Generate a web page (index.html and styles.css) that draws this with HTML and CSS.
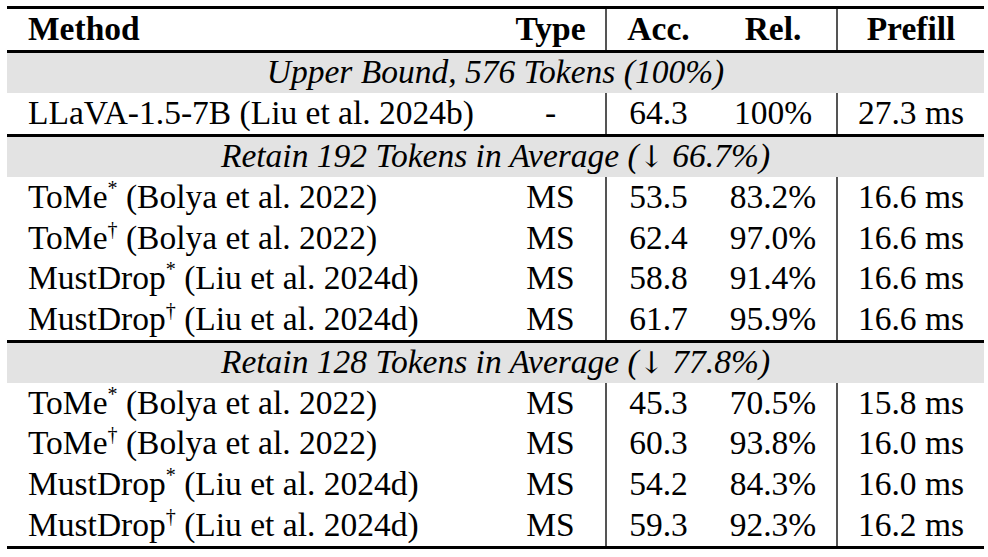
FILE: index.html
```html
<!DOCTYPE html>
<html>
<head>
<meta charset="utf-8">
<link rel="stylesheet" href="styles.css">
</head>
<body>
<table class="results">
  <colgroup>
    <col class="c-method"><col class="c-type"><col class="c-acc"><col class="c-rel"><col class="c-prefill">
  </colgroup>
  <thead>
    <tr class="head">
      <th class="left">Method</th>
      <th>Type</th>
      <th class="sep">Acc.</th>
      <th>Rel.</th>
      <th class="sep">Prefill</th>
    </tr>
  </thead>
  <tbody>
    <tr class="group first"><td colspan="5">Upper Bound, 576 Tokens (100%)</td></tr>
    <tr>
      <td class="left">LLaVA-1.5-7B (Liu et al. 2024b)</td>
      <td>-</td><td class="sep">64.3</td><td>100%</td><td class="sep">27.3 ms</td>
    </tr>
  </tbody>
  <tbody>
    <tr class="group first"><td colspan="5">Retain 192 Tokens in Average (<span class="arrow">↓</span> 66.7%)</td></tr>
    <tr><td class="left">ToMe<sup>*</sup> (Bolya et al. 2022)</td><td>MS</td><td class="sep">53.5</td><td>83.2%</td><td class="sep">16.6 ms</td></tr>
    <tr><td class="left">ToMe<sup>†</sup> (Bolya et al. 2022)</td><td>MS</td><td class="sep">62.4</td><td>97.0%</td><td class="sep">16.6 ms</td></tr>
    <tr><td class="left">MustDrop<sup>*</sup> (Liu et al. 2024d)</td><td>MS</td><td class="sep">58.8</td><td>91.4%</td><td class="sep">16.6 ms</td></tr>
    <tr><td class="left">MustDrop<sup>†</sup> (Liu et al. 2024d)</td><td>MS</td><td class="sep">61.7</td><td>95.9%</td><td class="sep">16.6 ms</td></tr>
  </tbody>
  <tbody>
    <tr class="group first"><td colspan="5">Retain 128 Tokens in Average (<span class="arrow">↓</span> 77.8%)</td></tr>
    <tr><td class="left">ToMe<sup>*</sup> (Bolya et al. 2022)</td><td>MS</td><td class="sep">45.3</td><td>70.5%</td><td class="sep">15.8 ms</td></tr>
    <tr><td class="left">ToMe<sup>†</sup> (Bolya et al. 2022)</td><td>MS</td><td class="sep">60.3</td><td>93.8%</td><td class="sep">16.0 ms</td></tr>
    <tr><td class="left">MustDrop<sup>*</sup> (Liu et al. 2024d)</td><td>MS</td><td class="sep">54.2</td><td>84.3%</td><td class="sep">16.0 ms</td></tr>
    <tr class="last"><td class="left">MustDrop<sup>†</sup> (Liu et al. 2024d)</td><td>MS</td><td class="sep">59.3</td><td>92.3%</td><td class="sep">16.2 ms</td></tr>
  </tbody>
</table>
</body>
</html>
```
FILE: styles.css
```css
html, body {
  margin: 0;
  padding: 0;
  background: #ffffff;
}
body {
  padding: 6px 0 0 7px;
  font-family: "Liberation Serif", "Times New Roman", serif;
  color: #000000;
}
.results {
  width: 977px;
  table-layout: fixed;
  border-collapse: collapse;
  font-family: "Liberation Serif", "Times New Roman", serif;
  font-size: 33.5px;
  line-height: 1;
}
.c-method { width: 489px; }
.c-type { width: 110px; }
.c-acc { width: 104px; }
.c-rel { width: 127px; }
.c-prefill { width: 147px; }

.results th,
.results td {
  height: 38.6px;
  padding: 0 0 2px 0;
  text-align: center;
  vertical-align: middle;
  white-space: nowrap;
}
.results th {
  font-weight: bold;
}
.results .left {
  text-align: left;
  padding-left: 21px;
}
.results .sep {
  border-left: 2px solid #555555;
}
.head th {
  border-top: 3px solid #000000;
  border-bottom: 3px solid #000000;
}
.group td {
  background: #e3e3e3;
  font-style: italic;
}
.arrow {
  font-style: normal;
  font-family: "DejaVu Serif", serif;
  font-size: 0.9em;
}
tbody + tbody .first td {
  border-top: 3px solid #000000;
}
.last td {
  border-bottom: 3px solid #000000;
}
sup {
  font-size: 0.6em;
  line-height: 0;
  vertical-align: 0.65em;
}
```
